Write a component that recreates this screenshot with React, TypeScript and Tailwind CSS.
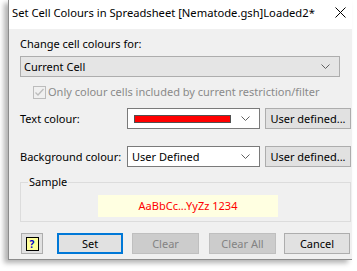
import React from 'react';

const Chevron = () => (
  <svg width="9" height="5" viewBox="0 0 9 5" className="shrink-0">
    <path d="M0.5 0.5 L4.5 4.5 L8.5 0.5" fill="none" stroke="#606060" strokeWidth="1" />
  </svg>
);

const Btn = ({
  label,
  disabled,
  primary,
  className = '',
}: {
  label: string;
  disabled?: boolean;
  primary?: boolean;
  className?: string;
}) => (
  <div
    className={
      'h-[21px] flex items-center justify-center ' +
      (primary
        ? 'border-2 border-[#0078d7] bg-[#e1e1e1] text-black '
        : disabled
        ? 'border border-[#bfbfbf] bg-[#cccccc] text-[#838383] '
        : 'border border-[#adadad] bg-[#e1e1e1] text-black ') +
      className
    }
  >
    {label}
  </div>
);

export default function App() {
  return (
    <div
      className="w-[357px] h-[271px] bg-white overflow-hidden text-[11px] leading-[14px] text-black"
      style={{ fontFamily: '"Noto Sans", "Segoe UI", sans-serif' }}
    >
      <div className="ml-[8px] w-[344px] h-[260px] bg-[#f0f0f0] border-l border-b border-[#8c8c8c] shadow-[-4px_3px_5px_rgba(0,0,0,0.3)] flex flex-col">
        {/* title bar */}
        <div className="h-[29px] bg-white flex items-center pl-[3px] pr-[6px] pb-[4px]">
          <span className="text-[11.2px] flex-1 whitespace-nowrap">Set Cell Colours in Spreadsheet [Nematode.gsh]Loaded2*</span>
          <svg width="11" height="11" viewBox="0 0 11 11">
            <path d="M0.5 0.5 L10.5 10.5 M10.5 0.5 L0.5 10.5" stroke="#000" strokeWidth="1" />
          </svg>
        </div>

        <div className="flex flex-col pl-[11px]">
          <div className="mt-[8px]">Change cell colours for:</div>
          <div className="mt-[5px] w-[320px] h-[21px] border border-[#adadad] bg-[#e5e5e5] flex items-center pl-[3px] pr-[9px]">
            <span className="flex-1">Current Cell</span>
            <Chevron />
          </div>

          <div className="mt-[8px] ml-[13px] flex items-center gap-[2px] text-[#8a8a8a]">
            <svg width="13" height="13" viewBox="0 0 13 13">
              <rect x="0.5" y="0.5" width="12" height="12" fill="#f0f0f0" stroke="#bcbcbc" />
              <path d="M2.5 6.5 L5 9 L10.5 3" fill="none" stroke="#bcbcbc" strokeWidth="1.3" />
            </svg>
            <span>Only colour cells included by current restriction/filter</span>
          </div>

          <div className="mt-[9px] flex items-center h-[21px]">
            <span className="w-[107px]">Text colour:</span>
            <div className="w-[133px] h-[21px] border border-[#7a7a7a] bg-white flex items-center pl-[6px] pr-[9px]">
              <div className="w-[97px] h-[8px] bg-[#ff0000] border border-[#505050]" />
              <div className="flex-1" />
              <Chevron />
            </div>
            <Btn label="User defined..." className="ml-[5px] w-[86px]" />
          </div>

          <div className="mt-[17px] flex items-center h-[21px]">
            <span className="w-[107px]">Background colour:</span>
            <div className="w-[133px] h-[21px] border border-[#7a7a7a] bg-white flex items-center pl-[4px] pr-[9px]">
              <span className="flex-1">User Defined</span>
              <Chevron />
            </div>
            <Btn label="User defined..." className="ml-[5px] w-[86px]" />
          </div>

          <div className="mt-[15px] relative w-[331px] h-[40px] border border-[#dcdcdc] flex items-center">
            <span className="absolute left-[7px] top-[-8px] bg-[#f0f0f0] px-[1px]">Sample</span>
            <div className="ml-[77px] mt-[8px] w-[180px] h-[22px] bg-[#ffffe1] flex items-center justify-center text-[#ff0000]">
              AaBbCc...YyZz 1234
            </div>
          </div>

          <div className="mt-[11px] flex items-center">
            <div className="ml-[1px] w-[22px] h-[21px] border border-[#adadad] bg-[#e1e1e1] flex items-center justify-center">
              <div className="w-[13px] h-[14px] border border-black bg-[#ffff99] flex items-center justify-center text-[#0000cc] font-bold text-[10px] leading-none">
                ?
              </div>
            </div>
            <Btn label="Set" primary className="ml-[14px] w-[66px]" />
            <Btn label="Clear" disabled className="ml-[9px] w-[67px]" />
            <Btn label="Clear All" disabled className="ml-[10px] w-[67px]" />
            <Btn label="Cancel" className="ml-[8px] w-[66px]" />
          </div>
        </div>
      </div>
    </div>
  );
}
